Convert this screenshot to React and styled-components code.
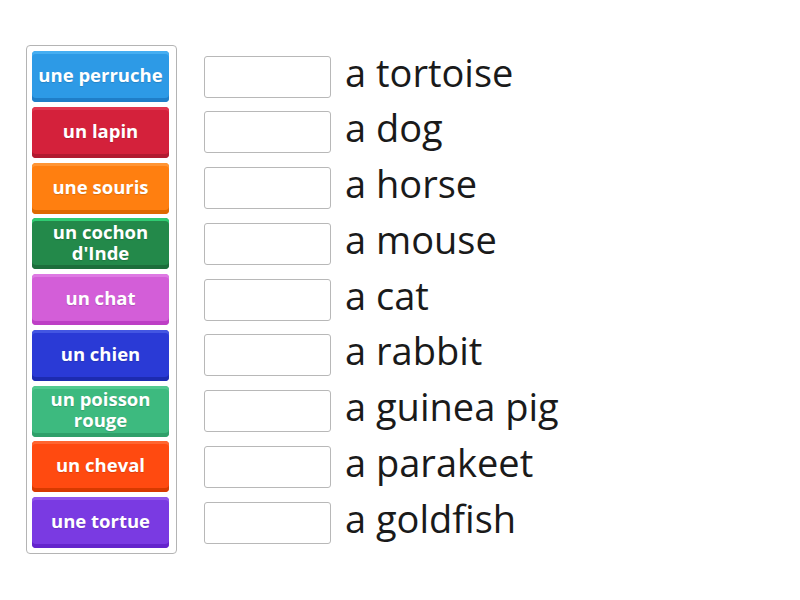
import React from 'react';
import styled, { createGlobalStyle } from 'styled-components';

const GlobalStyle = createGlobalStyle`
	body {
		margin: 0;
		background: #ffffff;
		font-family: 'Open Sans', 'Noto Sans', sans-serif;
	}
`;

const Page = styled.div`
	display: flex;
	align-items: flex-start;
	gap: 27px;
	padding: 45px 0 0 26px;
`;

const Panel = styled.div`
	display: flex;
	flex-direction: column;
	gap: 4.75px;
	width: 138px;
	padding: 5px 6px 5px 5px;
	border: 1px solid #b4b4b4;
	border-radius: 4px;
`;

const Tile = styled.div`
	display: flex;
	align-items: center;
	justify-content: center;
	height: 51px;
	width: 137px;
	box-sizing: border-box;
	padding: 0 3px 4px;
	border-radius: 4px;
	background: ${(p) => p.$bg};
	box-shadow: inset 0 3px 0 ${(p) => p.$top}, inset 0 -4px 0 ${(p) => p.$bottom};
	color: #ffffff;
	font-weight: 700;
	font-size: 18.5px;
	line-height: 21px;
	text-align: center;
	text-shadow: 0 1px 1px rgba(0, 0, 0, 0.15);
`;

const Answers = styled.div`
	display: flex;
	flex-direction: column;
	gap: 4.75px;
	padding-top: 6px;
`;

const Row = styled.div`
	display: flex;
	align-items: center;
	gap: 14px;
	height: 51px;
`;

const Slot = styled.div`
	width: 127px;
	height: 42px;
	box-sizing: border-box;
	border: 1px solid #b8b8b8;
	border-radius: 3px;
	background: #ffffff;
`;

const Word = styled.span`
	font-size: 38px;
	color: #1a1a1a;
	line-height: 40px;
	margin-bottom: 10px;
	white-space: nowrap;
`;

const tiles = [
	{ label: 'une perruche', bg: '#2d9ae6', top: '#45aef2', bottom: '#1f7ec8' },
	{ label: 'un lapin', bg: '#d4213b', top: '#e0354e', bottom: '#b11a30' },
	{ label: 'une souris', bg: '#ff7f10', top: '#ff9535', bottom: '#dd6a00' },
	{ label: "un cochon d'Inde", bg: '#23894a', top: '#2fcc72', bottom: '#1c6e3b' },
	{ label: 'un chat', bg: '#d35ed8', top: '#de7ae3', bottom: '#bd3fc5' },
	{ label: 'un chien', bg: '#2a3ad6', top: '#4356e2', bottom: '#1d2bb0' },
	{ label: 'un poisson rouge', bg: '#3dba7f', top: '#52c990', bottom: '#2fa06a' },
	{ label: 'un cheval', bg: '#ff4a10', top: '#ff6530', bottom: '#d73a00' },
	{ label: 'une tortue', bg: '#7a3ae2', top: '#9055ea', bottom: '#6424cc' },
];

const words = [
	'a tortoise',
	'a dog',
	'a horse',
	'a mouse',
	'a cat',
	'a rabbit',
	'a guinea pig',
	'a parakeet',
	'a goldfish',
];

const App = () => {
	return (
		<>
			<GlobalStyle />
			<Page>
				<Panel>
					{tiles.map((t) => (
						<Tile key={t.label} $bg={t.bg} $top={t.top} $bottom={t.bottom}>
							{t.label}
						</Tile>
					))}
				</Panel>
				<Answers>
					{words.map((w) => (
						<Row key={w}>
							<Slot />
							<Word>{w}</Word>
						</Row>
					))}
				</Answers>
			</Page>
		</>
	);
};

export default App;
